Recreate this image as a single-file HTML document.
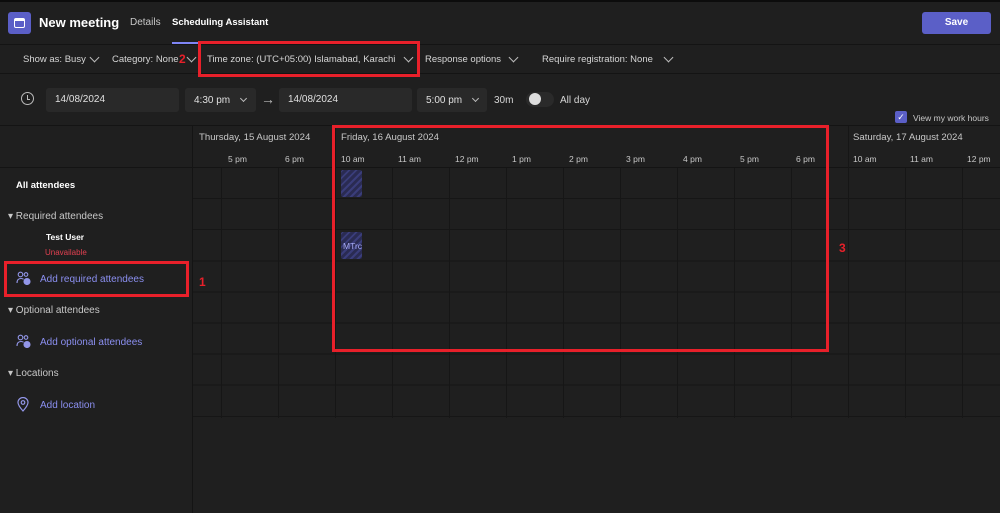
<!DOCTYPE html>
<html><head><meta charset="utf-8"><style>
*{margin:0;padding:0;box-sizing:border-box}
body{width:1000px;height:513px;background:#1f1f1f;font-family:"Liberation Sans",sans-serif;color:#d6d6d6;position:relative;overflow:hidden;font-size:10px}
.a{position:absolute;white-space:nowrap}
.chev{position:absolute;width:7px;height:7px;border-right:1.2px solid #bbb;border-bottom:1.2px solid #bbb;transform:rotate(45deg)}
.inp{position:absolute;background:#292929;border-radius:3px;height:24px;top:88px;font-size:10px;color:#e0e0e0;padding:6px 9px}
.red{position:absolute;border:3px solid #e8202a}
.rn{position:absolute;color:#e8202a;font-weight:bold;font-size:12px}
.lnk{color:#8b8ff0;font-size:10px}
.hr{position:absolute;top:154px;font-size:8.5px;color:#c8c8c8}
.blk{position:absolute;left:341px;width:21px;border-radius:2px;background:repeating-linear-gradient(135deg,#3a3d7a 0 2px,#2a2b52 2px 5px)}
</style></head><body>
<div class="a" style="left:0;top:0;width:1000px;height:2px;background:#0c0c0c"></div>
<div class="a" style="left:8px;top:12px;width:23px;height:22px;background:#5b5fc7;border-radius:3px"></div>
<div class="a" style="left:14px;top:18px;width:11px;height:10px;border:1.5px solid #fff;border-top-width:3px;border-radius:2px"></div>
<div class="a" style="left:39px;top:15px;font-size:13px;font-weight:bold;color:#fff">New meeting</div>
<div class="a" style="left:130px;top:17px;font-size:10px;color:#c8c8c8">Details</div>
<div class="a" style="left:172px;top:17px;font-size:9.5px;color:#fff;font-weight:bold">Scheduling Assistant</div>
<div class="a" style="left:172px;top:42px;width:27px;height:2px;background:#7f85f5"></div>
<div class="a" style="left:922px;top:12px;width:69px;height:22px;background:#5b5fc7;border-radius:3px;color:#fff;font-weight:bold;font-size:10px;text-align:center;line-height:22px">Save</div>
<div class="a" style="left:0;top:44px;width:1000px;height:1px;background:#141414"></div>
<div class="a" style="left:0;top:73px;width:1000px;height:1px;background:#141414"></div>
<div class="a" style="left:23px;top:54px;font-size:9.5px">Show as: Busy</div><span class="chev" style="left:91px;top:54px"></span>
<div class="a" style="left:112px;top:54px;font-size:9.5px">Category: None</div><span class="chev" style="left:188px;top:54px"></span>
<div class="rn" style="left:179px;top:52px">2</div>
<div class="a" style="left:207px;top:54px;font-size:9.5px">Time zone: (UTC+05:00) Islamabad, Karachi</div><span class="chev" style="left:405px;top:54px"></span>
<div class="red" style="left:198px;top:41px;width:222px;height:36px"></div>
<div class="a" style="left:425px;top:54px;font-size:9.5px">Response options</div><span class="chev" style="left:510px;top:54px"></span>
<div class="a" style="left:542px;top:54px;font-size:9.5px">Require registration: None</div><span class="chev" style="left:665px;top:54px"></span>
<div class="a" style="left:21px;top:92px;width:13px;height:13px;border:1.3px solid #bbb;border-radius:50%"></div>
<div class="a" style="left:27px;top:95px;width:3px;height:5px;border-left:1.2px solid #bbb;border-bottom:1.2px solid #bbb"></div>
<div class="inp" style="left:46px;width:133px">14/08/2024</div>
<div class="inp" style="left:185px;width:71px;padding-top:7px">4:30 pm</div><span class="chev" style="left:241px;top:96px;width:5px;height:5px"></span>
<div class="a" style="left:261px;top:91px;font-size:14px;color:#bbb">→</div>
<div class="inp" style="left:279px;width:133px">14/08/2024</div>
<div class="inp" style="left:417px;width:70px;padding-top:7px">5:00 pm</div><span class="chev" style="left:473px;top:96px;width:5px;height:5px"></span>
<div class="a" style="left:494px;top:95px">30m</div>
<div class="a" style="left:526px;top:92px;width:28px;height:15px;background:#2a2a2a;border-radius:8px"></div>
<div class="a" style="left:529px;top:93px;width:12px;height:12px;background:#ddd;border-radius:50%"></div>
<div class="a" style="left:560px;top:95px">All day</div>
<div class="a" style="left:895px;top:111px;width:12px;height:12px;background:#5b5fc7;border-radius:2px;color:#fff;font-size:9px;text-align:center;line-height:12px">✓</div>
<div class="a" style="left:913px;top:113px;font-size:8.5px;color:#c8c8c8">View my work hours</div>
<div class="a" style="left:0;top:125px;width:1000px;height:1px;background:#141414"></div>
<div class="a" style="left:192px;top:126px;width:1px;height:387px;background:#141414"></div>
<div class="a" style="left:0;top:167px;width:1000px;height:1px;background:#141414"></div>
<div class="a" style="left:193px;top:168px;width:807px;height:250px;background:repeating-linear-gradient(180deg,transparent 0 30.1px,#161616 30.1px 31.1px)"></div>
<div class="a" style="left:193px;top:168px;width:807px;height:250px;background:repeating-linear-gradient(90deg,transparent 0 28px,#161616 28px 29px,transparent 29px 57px)"></div>
<div class="a" style="left:335px;top:126px;width:1px;height:42px;background:#161616"></div>
<div class="a" style="left:848px;top:126px;width:1px;height:42px;background:#161616"></div>
<div class="a" style="left:199px;top:132px;color:#c8c8c8;font-size:9.6px">Thursday, 15 August 2024</div>
<div class="a" style="left:341px;top:132px;color:#c8c8c8;font-size:9.6px">Friday, 16 August 2024</div>
<div class="a" style="left:853px;top:132px;color:#c8c8c8;font-size:9.6px">Saturday, 17 August 2024</div>
<div class="hr" style="left:228px">5 pm</div>
<div class="hr" style="left:285px">6 pm</div>
<div class="hr" style="left:341px">10 am</div>
<div class="hr" style="left:398px">11 am</div>
<div class="hr" style="left:455px">12 pm</div>
<div class="hr" style="left:512px">1 pm</div>
<div class="hr" style="left:569px">2 pm</div>
<div class="hr" style="left:626px">3 pm</div>
<div class="hr" style="left:683px">4 pm</div>
<div class="hr" style="left:740px">5 pm</div>
<div class="hr" style="left:796px">6 pm</div>
<div class="hr" style="left:853px">10 am</div>
<div class="hr" style="left:910px">11 am</div>
<div class="hr" style="left:967px">12 pm</div>
<div class="blk" style="top:170px;height:27px"></div>
<div class="blk" style="top:232px;height:27px;color:#a9acf5;font-size:8.5px;padding:9px 0 0 2px;overflow:hidden">MTrc</div>
<div class="red" style="left:332px;top:125px;width:497px;height:227px"></div>
<div class="rn" style="left:839px;top:241px">3</div>
<div class="a" style="left:16px;top:180px;font-weight:bold;color:#fff;font-size:9.5px">All attendees</div>
<div class="a" style="left:8px;top:211px;color:#c8c8c8">▾ Required attendees</div>
<div class="a" style="left:46px;top:232px;font-weight:bold;color:#fff;font-size:8.5px">Test User</div>
<div class="a" style="left:45px;top:248px;color:#e04050;font-size:8px">Unavailable</div>
<div class="red" style="left:4px;top:261px;width:185px;height:36px"></div>
<div class="rn" style="left:199px;top:275px">1</div>
<svg class="a" style="left:16px;top:271px" width="15" height="14" viewBox="0 0 15 14" fill="none" stroke="#9296e8" stroke-width="1.1"><circle cx="4.5" cy="3.5" r="2.3"/><circle cx="10" cy="3.5" r="1.8"/><path d="M1 12c0-3 1.5-4.5 4-4.5 1 0 2 .3 2.5.8"/><circle cx="11" cy="10.5" r="3" fill="#9296e8"/></svg>
<div class="a lnk" style="left:40px;top:274px">Add required attendees</div>
<div class="a" style="left:8px;top:305px;color:#c8c8c8">▾ Optional attendees</div>
<svg class="a" style="left:16px;top:334px" width="15" height="14" viewBox="0 0 15 14" fill="none" stroke="#9296e8" stroke-width="1.1"><circle cx="4.5" cy="3.5" r="2.3"/><circle cx="10" cy="3.5" r="1.8"/><path d="M1 12c0-3 1.5-4.5 4-4.5 1 0 2 .3 2.5.8"/><circle cx="11" cy="10.5" r="3" fill="#9296e8"/></svg>
<div class="a lnk" style="left:40px;top:337px">Add optional attendees</div>
<div class="a" style="left:8px;top:368px;color:#c8c8c8">▾ Locations</div>
<svg class="a" style="left:17px;top:397px" width="12" height="15" viewBox="0 0 12 15" fill="none" stroke="#9296e8" stroke-width="1.2"><path d="M6 14C2 9.5 1 7.5 1 5.5a5 5 0 0 1 10 0c0 2-1 4-5 8.5z"/><circle cx="6" cy="5.5" r="1.8"/></svg>
<div class="a lnk" style="left:40px;top:400px">Add location</div>
</body></html>
